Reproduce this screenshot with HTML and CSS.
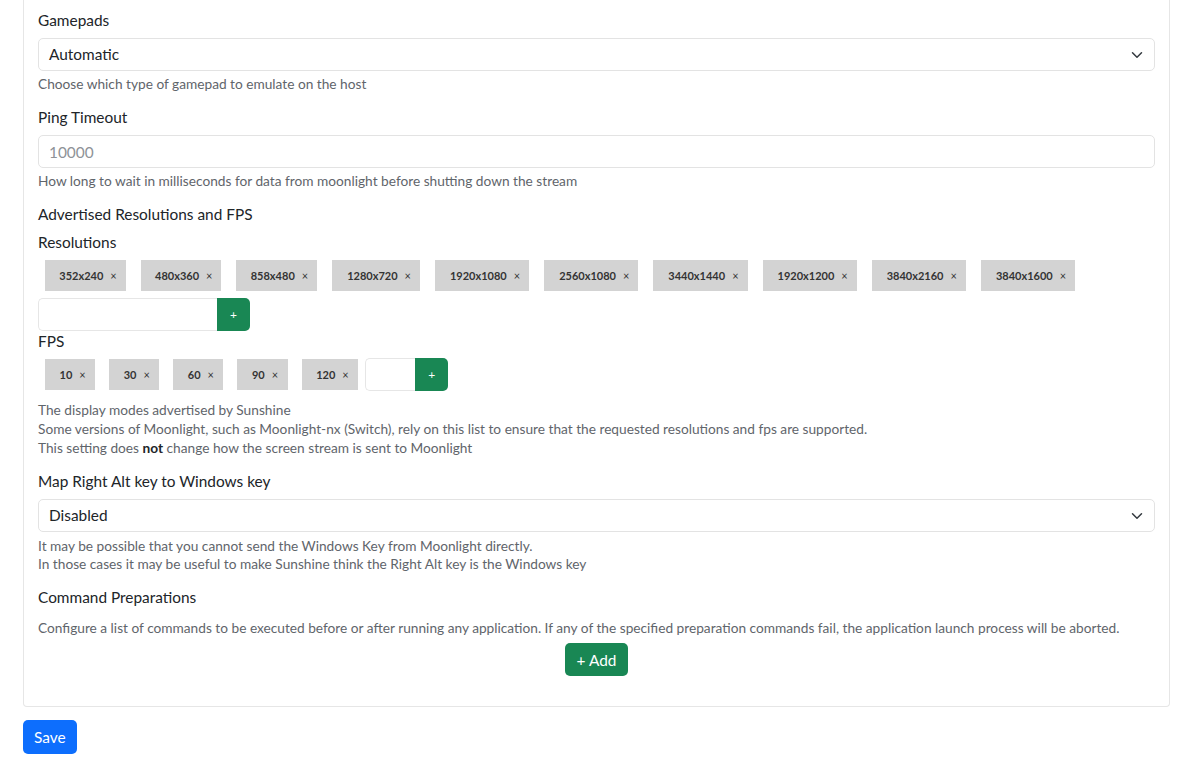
FILE: index.html
```html
<!DOCTYPE html>
<html lang="en">
<head>
<meta charset="UTF-8">
<meta name="viewport" content="width=device-width, initial-scale=1.0">
<title>Sunshine Configuration</title>
<link rel="stylesheet" href="styles.css">
</head>
<body>

<div class="page">
  <div class="card">

    <!-- Gamepads -->
    <div class="field">
      <label class="form-label">Gamepads</label>
      <div class="select">
        <span>Automatic</span>
        <svg class="chevron" width="12" height="12" viewBox="0 0 16 16"><path d="M2 5l6 6 6-6" fill="none" stroke="#343a40" stroke-width="2" stroke-linecap="round" stroke-linejoin="round"/></svg>
      </div>
      <div class="form-text">Choose which type of gamepad to emulate on the host</div>
    </div>

    <!-- Ping timeout -->
    <div class="field">
      <label class="form-label">Ping Timeout</label>
      <div class="input"><span class="placeholder">10000</span></div>
      <div class="form-text">How long to wait in milliseconds for data from moonlight before shutting down the stream</div>
    </div>

    <!-- Resolutions and FPS -->
    <div class="field">
      <label class="form-label">Advertised Resolutions and FPS</label>
      <label class="form-label sub">Resolutions</label>
      <div class="chips">
        <span class="chip">352x240 <i>×</i></span>
        <span class="chip">480x360 <i>×</i></span>
        <span class="chip">858x480 <i>×</i></span>
        <span class="chip wide">1280x720 <i>×</i></span>
        <span class="chip wide">1920x1080 <i>×</i></span>
        <span class="chip wide">2560x1080 <i>×</i></span>
        <span class="chip wide">3440x1440 <i>×</i></span>
        <span class="chip wide">1920x1200 <i>×</i></span>
        <span class="chip wide">3840x2160 <i>×</i></span>
        <span class="chip wide">3840x1600 <i>×</i></span>
      </div>
      <div class="input-group res-add">
        <div class="group-input"></div>
        <button class="btn-plus">+</button>
      </div>
      <label class="form-label sub fps-label">FPS</label>
      <div class="chips fps">
        <span class="chip small">10 <i>×</i></span>
        <span class="chip small">30 <i>×</i></span>
        <span class="chip small">60 <i>×</i></span>
        <span class="chip small">90 <i>×</i></span>
        <span class="chip small">120 <i>×</i></span>
        <div class="input-group fps-add">
          <div class="group-input"></div>
          <button class="btn-plus">+</button>
        </div>
      </div>
      <div class="form-text lines">
        The display modes advertised by Sunshine<br>
        Some versions of Moonlight, such as Moonlight-nx (Switch), rely on this list to ensure that the requested resolutions and fps are supported.<br>
        This setting does <b>not</b> change how the screen stream is sent to Moonlight
      </div>
    </div>

    <!-- Right alt -->
    <div class="field">
      <label class="form-label">Map Right Alt key to Windows key</label>
      <div class="select">
        <span>Disabled</span>
        <svg class="chevron" width="12" height="12" viewBox="0 0 16 16"><path d="M2 5l6 6 6-6" fill="none" stroke="#343a40" stroke-width="2" stroke-linecap="round" stroke-linejoin="round"/></svg>
      </div>
      <div class="form-text tight">
        It may be possible that you cannot send the Windows Key from Moonlight directly.<br>
        In those cases it may be useful to make Sunshine think the Right Alt key is the Windows key
      </div>
    </div>

    <!-- Command preparations -->
    <div class="field last">
      <label class="form-label">Command Preparations</label>
      <div class="form-text prep">Configure a list of commands to be executed before or after running any application. If any of the specified preparation commands fail, the application launch process will be aborted.</div>
      <div class="add-row">
        <button class="btn-add">+ Add</button>
      </div>
    </div>

  </div>

  <button class="btn-save">Save</button>
</div>

</body>
</html>
```

FILE: styles.css
```css
body {
  margin: 0;
  background: #fff;
  font-family: "Lato", "Liberation Sans", sans-serif;
  color: #212529;
}
.page {
  padding: 0 22px 0 23px;
}
.card {
  border: 1px solid #e6e6e6;
  border-top: none;
  border-radius: 0 0 4px 4px;
  padding: 10px 14px 30px 14px;
}
.field {
  margin-bottom: 14px;
}
.field.last {
  margin-bottom: 0;
}
.form-label {
  display: block;
  font-size: 15.4px;
  line-height: 20px;
  margin-bottom: 8px;
}
.select, .input {
  height: 31px;
  border: 1px solid #e3e3e3;
  border-radius: 5px;
  display: flex;
  align-items: center;
  justify-content: space-between;
  padding: 0 11px 0 10px;
  font-size: 15.4px;
}
.select span {
  margin-top: -2px;
}
.placeholder {
  color: #8e9297;
}
.form-text {
  font-size: 13.7px;
  line-height: 19px;
  color: #5f656b;
  margin-top: 3px;
}
.form-text b {
  color: #212529;
}
.chips {
  display: flex;
  flex-wrap: wrap;
  gap: 15px;
  padding-left: 7px;
}
.chips.fps {
  gap: 14px;
}
.chip {
  background: #d3d3d3;
  height: 31px;
  display: flex;
  align-items: center;
  padding: 0 9px 0 14.3px;
  font-size: 11px;
  font-weight: 700;
  color: #343434;
}
.chip i {
  font-style: normal;
  font-weight: 400;
  margin-left: 7px;
}
.chip.wide {
  padding-left: 15px;
}
.chip.small {
  padding: 0 9.5px 0 14.5px;
}
.input-group {
  display: flex;
  height: 33px;
}
.res-add {
  margin-top: 7px;
  width: 212px;
}
.fps-add {
  margin-left: -7px;
  margin-top: -1px;
}
.group-input {
  border: 1px solid #e6e6e6;
  border-right: none;
  border-radius: 5px 0 0 5px;
  width: 179px;
}
.fps-add .group-input {
  width: 49px;
}
.btn-plus {
  width: 33px;
  background: #198754;
  color: #fff;
  border: none;
  border-radius: 0 5px 5px 0;
  font-size: 12px;
  font-family: inherit;
  padding: 0;
}
.fps-label {
  margin-top: 0;
  margin-bottom: 8px;
}
.lines {
  margin-top: 9px;
}
.tight {
  line-height: 18px;
  margin-top: 5px;
}
.prep {
  margin-top: 11px;
}
.add-row {
  display: flex;
  justify-content: center;
  margin-top: 6px;
}
.btn-add {
  background: #198754;
  color: #fff;
  border: none;
  border-radius: 5px;
  height: 33px;
  padding: 0 12px;
  font-size: 15.4px;
  font-family: inherit;
}
.btn-save {
  margin-top: 13px;
  background: #0d6efd;
  color: #fff;
  border: none;
  border-radius: 5px;
  height: 34px;
  padding: 0 11px;
  font-size: 15.4px;
  font-family: inherit;
}
```
